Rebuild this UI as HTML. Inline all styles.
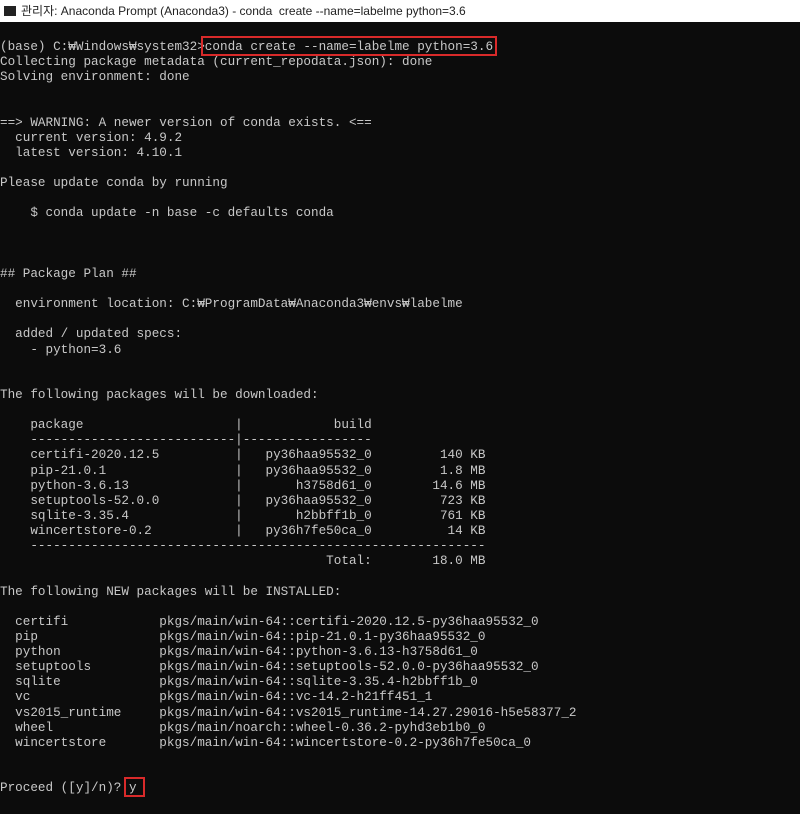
<!DOCTYPE html>
<html><head><meta charset="utf-8"><style>
body{margin:0;width:800px;height:814px;background:#0c0c0c;overflow:hidden;position:relative}
.tb{position:absolute;left:0;top:0;width:800px;height:22px;background:#fff;font:12px "Liberation Sans","Noto Sans CJK KR",sans-serif;color:#222;line-height:22px}
.tb .ic{position:absolute;left:4px;top:6px;width:12px;height:10px;background:#222}
.tb span{position:absolute;left:21px;top:0}
pre{position:absolute;left:0;top:39px;margin:0;font:12.65px "Liberation Mono","Noto Sans CJK KR",monospace;line-height:15.12px;color:#c8c8c8;white-space:pre}
.box{position:absolute;border:2px solid #d92a2a;box-sizing:border-box}
</style></head><body>
<div class="tb"><div class="ic"></div><span>관리자: Anaconda Prompt (Anaconda3) - conda&nbsp; create --name=labelme python=3.6</span></div>
<pre>(base) C:₩Windows₩system32&gt;conda create --name=labelme python=3.6
Collecting package metadata (current_repodata.json): done
Solving environment: done


==&gt; WARNING: A newer version of conda exists. &lt;==
  current version: 4.9.2
  latest version: 4.10.1

Please update conda by running

    $ conda update -n base -c defaults conda



## Package Plan ##

  environment location: C:₩ProgramData₩Anaconda3₩envs₩labelme

  added / updated specs:
    - python=3.6


The following packages will be downloaded:

    package                    |            build
    ---------------------------|-----------------
    certifi-2020.12.5          |   py36haa95532_0         140 KB
    pip-21.0.1                 |   py36haa95532_0         1.8 MB
    python-3.6.13              |       h3758d61_0        14.6 MB
    setuptools-52.0.0          |   py36haa95532_0         723 KB
    sqlite-3.35.4              |       h2bbff1b_0         761 KB
    wincertstore-0.2           |   py36h7fe50ca_0          14 KB
    ------------------------------------------------------------
                                           Total:        18.0 MB

The following NEW packages will be INSTALLED:

  certifi            pkgs/main/win-64::certifi-2020.12.5-py36haa95532_0
  pip                pkgs/main/win-64::pip-21.0.1-py36haa95532_0
  python             pkgs/main/win-64::python-3.6.13-h3758d61_0
  setuptools         pkgs/main/win-64::setuptools-52.0.0-py36haa95532_0
  sqlite             pkgs/main/win-64::sqlite-3.35.4-h2bbff1b_0
  vc                 pkgs/main/win-64::vc-14.2-h21ff451_1
  vs2015_runtime     pkgs/main/win-64::vs2015_runtime-14.27.29016-h5e58377_2
  wheel              pkgs/main/noarch::wheel-0.36.2-pyhd3eb1b0_0
  wincertstore       pkgs/main/win-64::wincertstore-0.2-py36h7fe50ca_0


Proceed ([y]/n)? y</pre>
<div class="box" style="left:201px;top:36px;width:296px;height:20px"></div>
<div class="box" style="left:124px;top:777px;width:21px;height:20px"></div>
</body></html>
